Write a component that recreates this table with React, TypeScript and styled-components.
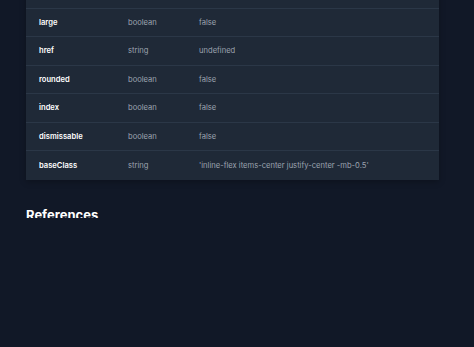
import React from "react";
import styled, { createGlobalStyle } from "styled-components";

const GlobalStyle = createGlobalStyle`
  html, body {
    margin: 0;
    padding: 0;
    background: #111827;
    font-family: Inter, "Liberation Sans", sans-serif;
  }
`;

const rows = [
  { name: "color", type: "string", value: "'blue'" },
  { name: "large", type: "boolean", value: "false" },
  { name: "href", type: "string", value: "undefined" },
  { name: "rounded", type: "boolean", value: "false" },
  { name: "index", type: "boolean", value: "false" },
  { name: "dismissable", type: "boolean", value: "false" },
  { name: "baseClass", type: "string", value: "'inline-flex items-center justify-center -mb-0.5'" },
];

function App() {
  return (
    <>
      <GlobalStyle />
      <Viewport>
        <Content>
          <Table>
            {rows.map((row) => (
              <Row key={row.name}>
                <NameCell>{row.name}</NameCell>
                <TypeCell>{row.type}</TypeCell>
                <ValueCell>{row.value}</ValueCell>
              </Row>
            ))}
          </Table>
          <Heading>References</Heading>
        </Content>
      </Viewport>
    </>
  );
}

const Viewport = styled.div`
  height: 218px;
  overflow: hidden;
`;

const Content = styled.div`
  margin-top: -20px;
  padding-left: 26px;
  width: 413px;
`;

const Table = styled.div`
  background: #1f2937;
  box-shadow: 0 2px 6px rgba(0, 0, 0, 0.25);
`;

const Row = styled.div`
  display: grid;
  grid-template-columns: 89px 71px 1fr;
  align-items: center;
  height: 28.5px;
  box-sizing: border-box;
  padding-left: 13px;
  font-size: 7.6px;
  border-bottom: 1px solid #2b3747;

  &:last-child {
    border-bottom: none;
  }
`;

const NameCell = styled.div`
  color: #ffffff;
  font-weight: 600;
`;

const TypeCell = styled.div`
  color: #9ca3af;
`;

const ValueCell = styled.div`
  color: #9ca3af;
  white-space: nowrap;
`;

const Heading = styled.h2`
  margin: 27px 0 0;
  color: #ffffff;
  font-size: 13px;
  line-height: 16px;
  font-weight: 700;
`;

export default App;
